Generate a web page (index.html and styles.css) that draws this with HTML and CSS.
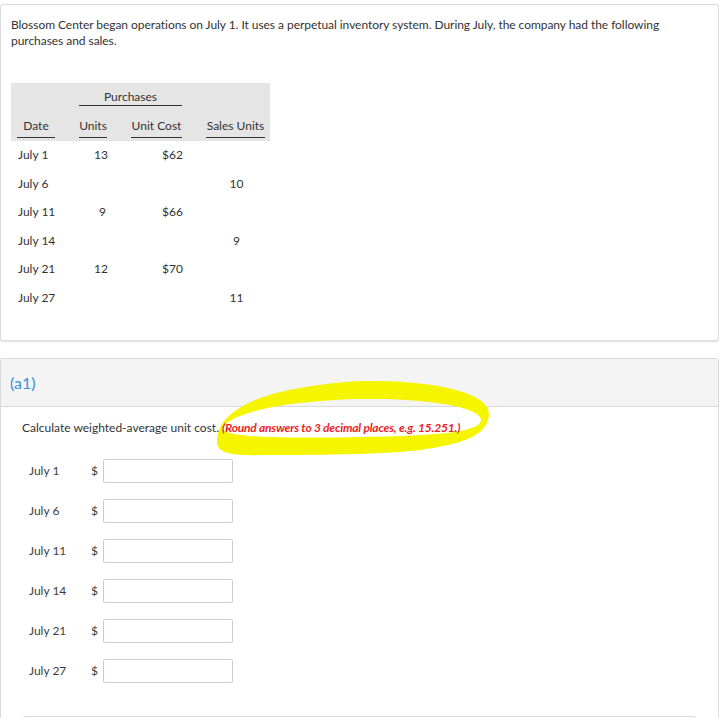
FILE: index.html
```html
<!DOCTYPE html>
<html>
<head>
<meta charset="utf-8">
<link rel="stylesheet" href="styles.css">
</head>
<body>
<div class="card intro">
  <p class="lead">Blossom Center began operations on July 1. It uses a perpetual inventory system. During July, the company had the following purchases and sales.</p>
  <div class="tbl">
    <div class="thead">
      <div></div>
      <div class="purch">Purchases</div>
      <div></div>
      <div class="th">Date</div>
      <div class="th">Units</div>
      <div class="th">Unit Cost</div>
      <div class="th">Sales Units</div>
    </div>
    <div class="tbody">
      <div>July 1</div><div class="r">13</div><div class="r">$62</div><div class="c"></div>
      <div>July 6</div><div class="r"></div><div class="r"></div><div class="c">10</div>
      <div>July 11</div><div class="r nine">9</div><div class="r">$66</div><div class="c"></div>
      <div>July 14</div><div class="r"></div><div class="r"></div><div class="c">9</div>
      <div>July 21</div><div class="r">12</div><div class="r">$70</div><div class="c"></div>
      <div>July 27</div><div class="r"></div><div class="r"></div><div class="c">11</div>
    </div>
  </div>
</div>

<div class="card part">
  <div class="part-head">(a1)</div>
  <div class="part-body">
    <p class="prompt">Calculate weighted-average unit cost. <em class="note">(Round answers to 3 decimal places, e.g. 15.251.)</em></p>
    <div class="answers">
      <div class="ans"><span class="lbl">July 1</span><span class="cur">$</span><input class="box" type="text"></div>
      <div class="ans"><span class="lbl">July 6</span><span class="cur">$</span><input class="box" type="text"></div>
      <div class="ans"><span class="lbl">July 11</span><span class="cur">$</span><input class="box" type="text"></div>
      <div class="ans"><span class="lbl">July 14</span><span class="cur">$</span><input class="box" type="text"></div>
      <div class="ans"><span class="lbl">July 21</span><span class="cur">$</span><input class="box" type="text"></div>
      <div class="ans"><span class="lbl">July 27</span><span class="cur">$</span><input class="box" type="text"></div>
    </div>
    <div class="next-card"></div>
  </div>
</div>

<svg class="highlight" width="300" height="100" viewBox="200 370 300 100" xmlns="http://www.w3.org/2000/svg">
  <path fill="#f5f500" fill-rule="evenodd" d="M217 442 C216 420 240 398 300 388 C330 383 350 381 365 381 C430 380 490 392 489 414 C488 436 462 444 420 450 C390 454 330 455 262 455 C228 456 217 452 217 442 Z M223 428 C226 418 260 407 300 403 C330 400 345 399 362 399 C420 398 481 406 481 420 C480 432 440 436 360 437 C300 438 222 439 223 428 Z"/>
</svg>
</body>
</html>
```

FILE: styles.css
```css
html, body {
  margin: 0;
  padding: 0;
  overflow: hidden;
}
body {
  position: relative;
  width: 719px;
  height: 718px;
  font-family: Lato, "Open Sans", sans-serif;
  font-size: 12px;
  line-height: 16px;
  color: #333;
  background: #fff;
}
.card {
  box-sizing: border-box;
  width: 719px;
  border: 1px solid #dadada;
  border-radius: 3px;
  background: #fff;
}
.intro {
  margin-top: 4px;
  height: 337px;
  padding: 12px 10px;
  box-shadow: 0 1px 2px rgba(0,0,0,0.12);
}
.lead {
  margin: 0;
  width: 660px;
  letter-spacing: -0.05px;
}
.tbl {
  margin-top: 34px;
  width: 259px;
}
.thead {
  background: #e5e5e5;
  padding: 6px 5px 3px 6px;
  display: grid;
  grid-template-columns: 38px 28px 51px 59px;
  column-gap: 24px;
  row-gap: 12px;
}
.purch {
  grid-column: 2 / 4;
  text-align: center;
  border-bottom: 1px solid #333;
}
.th {
  text-align: center;
  padding-bottom: 3px;
  border-bottom: 1px solid #333;
  white-space: nowrap;
}
.tbody {
  display: grid;
  grid-template-columns: 38px 28px 51px 59px;
  column-gap: 24px;
  grid-auto-rows: 28.5px;
  align-items: center;
  padding-left: 7px;
  white-space: nowrap;
}
.r { text-align: right; }
.nine { padding-right: 2px; }
.c { text-align: center; }

.part {
  margin-top: 17px;
  height: 360px;
  border-bottom: none;
  border-radius: 3px 3px 0 0;
}
.part-head {
  height: 48px;
  box-sizing: border-box;
  background: #f4f4f4;
  border-bottom: 1px solid #dadada;
  display: flex;
  align-items: center;
  padding-left: 9px;
  padding-top: 1px;
  font-size: 16px;
  color: #3a8fdc;
}
.part-body {
  padding: 13px 0 0 21px;
}
.prompt {
  margin: 0;
  position: relative;
  z-index: 2;
}
.note {
  color: #ee1d27;
  font-weight: bold;
  font-style: italic;
  letter-spacing: -0.2px;
}
.answers {
  margin-top: 23px;
  padding-left: 7px;
  display: flex;
  flex-direction: column;
  gap: 16px;
}
.ans {
  display: flex;
  align-items: center;
  height: 24px;
}
.lbl {
  width: 62px;
  color: #3d3d3d;
}
.cur {
  width: 12px;
  color: #3d3d3d;
}
.box {
  box-sizing: border-box;
  width: 130px;
  height: 24px;
  margin: 0;
  border: 1px solid #cccccc;
  border-radius: 2px;
  background: #fff;
  padding: 0 4px;
}
.next-card {
  margin-top: 33px;
  margin-left: 1px;
  width: 673px;
  height: 4px;
  box-sizing: border-box;
  border: 1px solid #dadada;
  border-bottom: none;
  border-radius: 3px 3px 0 0;
}
.highlight {
  position: absolute;
  left: 200px;
  top: 370px;
  pointer-events: none;
  z-index: 1;
}
```
